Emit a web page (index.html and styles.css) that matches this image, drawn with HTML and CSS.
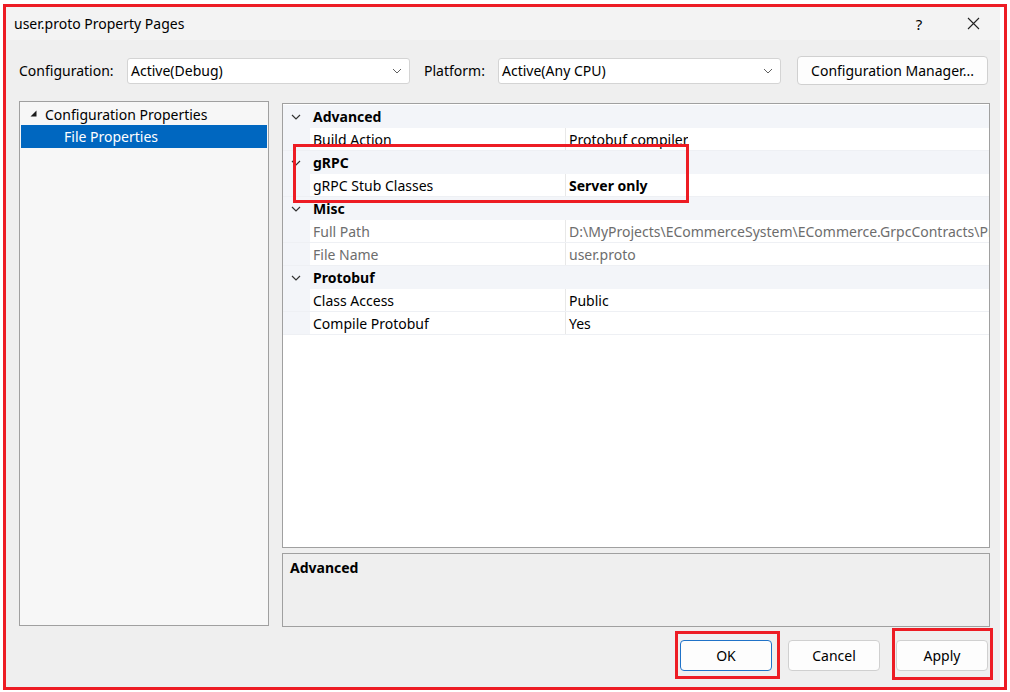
FILE: index.html
```html
<!DOCTYPE html>
<html lang="en">
<head>
    <meta charset="UTF-8">
    <title>user.proto Property Pages</title>
    <link rel="stylesheet" href="styles.css">
</head>
<body>
    <div class="frame">
        <div class="dialog">
            <div class="titlebar">
                <span class="title">user.proto Property Pages</span>
                <span class="help">?</span>
                <span class="close">
                    <svg width="13" height="13" viewBox="0 0 13 13"><path d="M1 1 L12 12 M12 1 L1 12" stroke="#222" stroke-width="1.1" fill="none"/></svg>
                </span>
            </div>

            <div class="toolbar">
                <span class="cfg-label">Configuration:</span>
                <div class="combo">
                    <span>Active(Debug)</span>
                    <svg width="10" height="6" viewBox="0 0 10 6"><path d="M1 1 L5 5 L9 1" stroke="#606060" stroke-width="1" fill="none"/></svg>
                </div>
                <span class="cfg-label plat">Platform:</span>
                <div class="combo">
                    <span>Active(Any CPU)</span>
                    <svg width="10" height="6" viewBox="0 0 10 6"><path d="M1 1 L5 5 L9 1" stroke="#606060" stroke-width="1" fill="none"/></svg>
                </div>
                <button class="btn manager">Configuration Manager...</button>
            </div>

            <div class="main">
                <div class="tree">
                    <div class="tree-row">
                        <svg class="expander" width="7" height="7" viewBox="0 0 7 7"><polygon points="6.5,0.5 6.5,6.5 0.5,6.5" fill="#1a1a1a"/></svg>
                        <span>Configuration Properties</span>
                    </div>
                    <div class="tree-row child selected">File Properties</div>
                </div>

                <div class="right">
                    <div class="grid">
                        <div class="cat">
                            <span class="gutter"><svg width="10" height="6" viewBox="0 0 10 6"><path d="M1 1 L5 5 L9 1" stroke="#333" stroke-width="1.2" fill="none"/></svg></span>
                            <span class="cat-name">Advanced</span>
                        </div>
                        <div class="prop">
                            <span class="gutter"></span>
                            <span class="pname">Build Action</span>
                            <span class="pval">Protobuf compiler</span>
                        </div>
                        <div class="cat">
                            <span class="gutter"><svg width="10" height="6" viewBox="0 0 10 6"><path d="M1 1 L5 5 L9 1" stroke="#333" stroke-width="1.2" fill="none"/></svg></span>
                            <span class="cat-name">gRPC</span>
                        </div>
                        <div class="prop">
                            <span class="gutter"></span>
                            <span class="pname">gRPC Stub Classes</span>
                            <span class="pval bold">Server only</span>
                        </div>
                        <div class="cat">
                            <span class="gutter"><svg width="10" height="6" viewBox="0 0 10 6"><path d="M1 1 L5 5 L9 1" stroke="#333" stroke-width="1.2" fill="none"/></svg></span>
                            <span class="cat-name">Misc</span>
                        </div>
                        <div class="prop readonly">
                            <span class="gutter"></span>
                            <span class="pname">Full Path</span>
                            <span class="pval">D:\MyProjects\ECommerceSystem\ECommerce.GrpcContracts\Protos\user.proto</span>
                        </div>
                        <div class="prop readonly">
                            <span class="gutter"></span>
                            <span class="pname">File Name</span>
                            <span class="pval">user.proto</span>
                        </div>
                        <div class="cat">
                            <span class="gutter"><svg width="10" height="6" viewBox="0 0 10 6"><path d="M1 1 L5 5 L9 1" stroke="#333" stroke-width="1.2" fill="none"/></svg></span>
                            <span class="cat-name">Protobuf</span>
                        </div>
                        <div class="prop">
                            <span class="gutter"></span>
                            <span class="pname">Class Access</span>
                            <span class="pval">Public</span>
                        </div>
                        <div class="prop">
                            <span class="gutter"></span>
                            <span class="pname">Compile Protobuf</span>
                            <span class="pval">Yes</span>
                        </div>
                    </div>
                    <div class="desc">
                        <span class="desc-title">Advanced</span>
                    </div>
                </div>
            </div>

            <div class="buttons">
                <button class="btn default">OK</button>
                <button class="btn">Cancel</button>
                <button class="btn">Apply</button>
            </div>
        </div>
    </div>

    <!-- annotation boxes drawn over the screenshot -->
    <div class="mark mark-grpc"></div>
    <div class="mark mark-ok"></div>
    <div class="mark mark-apply"></div>
</body>
</html>
```

FILE: styles.css
```css
body {
    margin: 0;
    padding: 0;
    background-color: #fff;
    font-family: "Segoe UI", "Noto Sans", sans-serif;
    font-size: 14px;
    color: #000;
}

.frame {
    margin: 4px 0 0 3px;
    width: 998px;
    height: 680px;
    border: 3px solid #ed1c24;
}

.dialog {
    height: 100%;
    background-color: #efefef;
    border-right: 4px solid #fff;
    display: flex;
    flex-direction: column;
}

.titlebar {
    height: 33px;
    flex-shrink: 0;
    background-color: #f3f3f3;
    display: flex;
    align-items: center;
    padding-left: 8px;
}

.title {
    flex: 1;
}

.help {
    width: 20px;
    text-align: center;
    margin-right: 38px;
    font-size: 15px;
}

.close {
    display: flex;
    margin-right: 20px;
}

.toolbar {
    display: flex;
    align-items: center;
    padding: 16px 12px 16px 13px;
    height: 29px;
    flex-shrink: 0;
}

.cfg-label {
    width: 108px;
    flex-shrink: 0;
}

.cfg-label.plat {
    width: 74px;
    margin-left: 14px;
}

.combo {
    width: 283px;
    height: 26px;
    flex-shrink: 0;
    box-sizing: border-box;
    background-color: #fff;
    border: 1px solid #d4d4d4;
    border-radius: 3px;
    display: flex;
    align-items: center;
    justify-content: space-between;
    padding: 0 7px 0 3px;
}

.btn {
    font-family: inherit;
    font-size: 14px;
    color: #000;
    background-color: #fdfdfd;
    border: 1px solid #d0d0d0;
    border-radius: 4px;
    height: 31px;
    width: 92px;
    padding: 0;
}

.btn.manager {
    width: 191px;
    height: 29px;
    margin-left: 16px;
    flex-shrink: 0;
}

.btn.default {
    border-color: #1f72c8;
}

.main {
    display: flex;
    gap: 13px;
    padding: 0 10px 0 13px;
    height: 526px;
    flex-shrink: 0;
}

.tree {
    width: 250px;
    flex-shrink: 0;
    height: 525px;
    box-sizing: border-box;
    border: 1px solid #a0a0a0;
    background-color: #f7f7f7;
    padding: 1px;
}

.tree-row {
    height: 22px;
    display: flex;
    align-items: center;
    padding-left: 9px;
    gap: 8px;
    white-space: nowrap;
}

.tree-row.child {
    height: 23px;
    padding-left: 43px;
}

.tree-row.selected {
    background-color: #0067c0;
    color: #fff;
}

.expander {
    margin-top: -2px;
}

.right {
    flex: 1;
    min-width: 0;
    display: flex;
    flex-direction: column;
    padding-top: 2px;
    gap: 5px;
}

.grid {
    height: 446px;
    box-sizing: border-box;
    border: 1px solid #a0a0a0;
    background-color: #fff;
    overflow: hidden;
    padding-top: 1px;
}

.cat,
.prop {
    display: flex;
    height: 23px;
    align-items: center;
}

.cat {
    background-color: #f3f5f9;
}

.gutter {
    width: 27px;
    height: 100%;
    flex-shrink: 0;
    background-color: #f3f5f9;
    display: flex;
    align-items: center;
    padding-left: 8px;
    box-sizing: border-box;
}

.cat-name {
    font-weight: bold;
    padding-left: 3px;
}

.prop {
    border-bottom: 1px solid #eef0f4;
    box-sizing: border-box;
}

.pname {
    width: 256px;
    flex-shrink: 0;
    padding-left: 3px;
    box-sizing: border-box;
    height: 100%;
    display: flex;
    align-items: center;
    border-right: 1px solid #e8e8e8;
}

.pval {
    padding-left: 3px;
    white-space: nowrap;
    overflow: hidden;
}

.bold {
    font-weight: bold;
}

.readonly .pname,
.readonly .pval {
    color: #6d6d6d;
}

.desc {
    height: 74px;
    box-sizing: border-box;
    border: 1px solid #a0a0a0;
    background-color: #efefef;
    padding: 4px 7px;
}

.desc-title {
    font-weight: bold;
}

.buttons {
    display: flex;
    justify-content: flex-end;
    gap: 16px;
    padding: 13px 12px 0 0;
}

.mark {
    position: absolute;
    border: 3px solid #ed1c24;
    box-sizing: border-box;
}

.mark-grpc {
    left: 293px;
    top: 144px;
    width: 396px;
    height: 59px;
}

.mark-ok {
    left: 675px;
    top: 631px;
    width: 105px;
    height: 48px;
}

.mark-apply {
    left: 892px;
    top: 628px;
    width: 101px;
    height: 52px;
}
```
